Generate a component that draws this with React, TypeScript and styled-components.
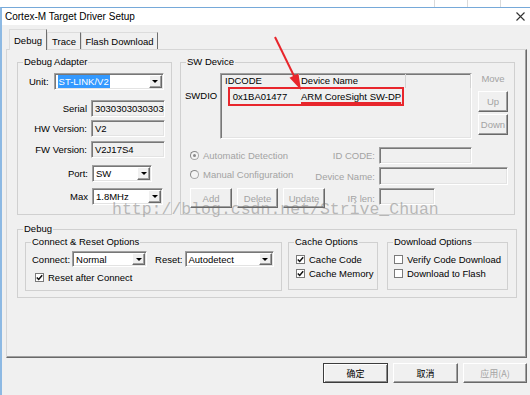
import React from "react";
import styled, { createGlobalStyle, css } from "styled-components";

const GlobalStyle = createGlobalStyle`
  html, body {
    margin: 0;
    padding: 0;
    background: #fff;
  }
  body {
    font-family: "Liberation Sans", "Noto Sans CJK SC", sans-serif;
    font-size: 9.5px;
    color: #000;
  }
  * {
    box-sizing: border-box;
  }
`;

const sunken = css`
  border-top: 1px solid #a0a0a0;
  border-left: 1px solid #a0a0a0;
  border-right: 1px solid #fff;
  border-bottom: 1px solid #fff;
  box-shadow: inset 1px 1px 0 #777, inset -1px -1px 0 #e3e3e3;
`;

const raised = css`
  border-top: 1px solid #fff;
  border-left: 1px solid #fff;
  border-right: 1px solid #696969;
  border-bottom: 1px solid #696969;
  box-shadow: inset -1px -1px 0 #a0a0a0;
  background: #f0f0f0;
`;

const Screen = styled.div`
  position: relative;
  width: 530px;
  height: 395px;
  overflow: hidden;
  display: flex;
  flex-direction: column;
  background: #fff;
`;

const BackdropStrip = styled.div`
  flex: none;
  height: 7px;
  background:
    linear-gradient(#dadada, #dadada) 434px 0 / 1px 100% no-repeat,
    linear-gradient(#dadada, #dadada) 467px 0 / 1px 100% no-repeat,
    linear-gradient(#dadada, #dadada) 500px 0 / 1px 100% no-repeat,
    #fff;
`;

const Window = styled.div`
  flex: 1;
  display: flex;
  flex-direction: column;
  border-top: 1px solid #76a9d9;
  border-left: 2px solid #8db9e3;
`;

const TitleBar = styled.div`
  flex: none;
  height: 17px;
  background: #fff;
  display: flex;
  align-items: center;
  justify-content: space-between;
  padding: 0 5px 0 3px;
  font-size: 10px;
`;

const Body = styled.div`
  flex: 1;
  background: #f0f0f0;
  padding: 4px 3px 0 4px;
  display: flex;
  flex-direction: column;
`;

const TabRow = styled.div`
  display: flex;
  align-items: flex-end;
  height: 20px;
  padding-left: 3px;
  position: relative;
  z-index: 1;
`;

const Tab = styled.div<{ $active?: boolean; $w: number }>`
  width: ${(p) => p.$w}px;
  height: ${(p) => (p.$active ? 21 : 17)}px;
  margin-bottom: ${(p) => (p.$active ? -1 : 0)}px;
  background: #f0f0f0;
  border-top: 1px solid #dcdcdc;
  border-left: 1px solid #dcdcdc;
  border-right: 1px solid #6e6e6e;
  display: flex;
  align-items: center;
  justify-content: center;
  white-space: nowrap;
`;

const Panel = styled.div`
  flex: none;
  width: 521px;
  height: 309px;
  border-top: 1px solid #d6d6d6;
  border-left: 1px solid #d6d6d6;
  border-right: 1px solid #696969;
  border-bottom: 1px solid #696969;
  box-shadow: inset -1px -1px 0 #a0a0a0;
  padding: 6px 0 0 10px;
  display: flex;
  flex-direction: column;
`;

const TopRow = styled.div`
  display: flex;
  gap: 8px;
`;

const GroupBox = styled.fieldset<{ $w: number; $h: number }>`
  flex: none;
  margin: 0;
  padding: 0;
  min-width: 0;
  width: ${(p) => p.$w}px;
  height: ${(p) => p.$h}px;
  border: 1px solid #d0d0d0;
`;

const GroupLegend = styled.legend`
  margin-left: 5px;
  padding: 0 1px;
  line-height: 12px;
  font-size: 9.5px;
`;

const FieldRow = styled.div<{ $top: number; $left?: number }>`
  display: flex;
  align-items: center;
  margin-top: ${(p) => p.$top}px;
  padding-left: ${(p) => p.$left ?? 0}px;
  white-space: nowrap;
`;

const FieldLabel = styled.span<{ $w?: number; $gap: number; $muted?: boolean }>`
  width: ${(p) => (p.$w ? `${p.$w}px` : "auto")};
  text-align: right;
  margin-right: ${(p) => p.$gap}px;
  color: ${(p) => (p.$muted ? "#a3a3a3" : "#000")};
  flex: none;
`;

const ReadField = styled.div<{ $w: number; $h?: number }>`
  ${sunken};
  width: ${(p) => p.$w}px;
  height: ${(p) => p.$h ?? 17}px;
  background: #f0f0f0;
  padding-left: 3px;
  line-height: 15px;
  overflow: hidden;
  white-space: nowrap;
`;

const ComboBox = styled.div<{ $w: number; $h?: number }>`
  ${sunken};
  width: ${(p) => p.$w}px;
  height: ${(p) => p.$h ?? 17}px;
  background: #fff;
  display: flex;
  align-items: stretch;
  padding: 1px;
  flex: none;
`;

const ComboText = styled.div`
  flex: 1;
  display: flex;
  align-items: center;
  padding-left: 2px;
  overflow: hidden;
`;

const Selected = styled.span`
  background: #3399ff;
  color: #fff;
  padding: 1px 1px;
  line-height: 12px;
`;

const ComboButton = styled.div`
  ${raised};
  width: 13px;
  display: flex;
  align-items: center;
  justify-content: center;
  &::after {
    content: "";
    border-left: 3px solid transparent;
    border-right: 3px solid transparent;
    border-top: 3px solid #000;
  }
`;

const SwContent = styled.div`
  display: flex;
  flex-direction: column;
`;

const SwTop = styled.div`
  display: flex;
  margin-top: 5px;
  padding-left: 4px;
`;

const SwdioLabel = styled.div`
  width: 35px;
  margin-top: 17px;
  line-height: 12px;
`;

const DeviceTable = styled.div`
  ${sunken};
  position: relative;
  width: 252px;
  height: 66px;
  background: #f0f0f0;
`;

const TableRow = styled.div<{ $h: number }>`
  display: flex;
  height: ${(p) => p.$h}px;
  line-height: ${(p) => p.$h}px;
  white-space: nowrap;
`;

const HeaderCell = styled.div<{ $w?: number; $pad: number }>`
  width: ${(p) => (p.$w ? `${p.$w}px` : "auto")};
  flex: ${(p) => (p.$w ? "none" : 1)};
  padding-left: ${(p) => p.$pad}px;
  border-right: 1px solid #d3d3d3;
`;

const DataCell = styled.div<{ $w: number; $center?: boolean; $pad?: number }>`
  width: ${(p) => p.$w}px;
  text-align: ${(p) => (p.$center ? "center" : "left")};
  padding-left: ${(p) => p.$pad ?? 0}px;
`;

const MarkedName = styled.span`
  text-decoration: underline;
  text-decoration-color: #e8262c;
  text-decoration-thickness: 2px;
  text-underline-offset: 2px;
`;

const RedFrame = styled.div`
  position: absolute;
  left: 7px;
  top: 13px;
  width: 176px;
  height: 19px;
  border: 2px solid #e8262c;
  pointer-events: none;
`;

const SideColumn = styled.div`
  display: flex;
  flex-direction: column;
  margin-left: 6px;
  width: 30px;
`;

const MutedLabel = styled.div`
  color: #a3a3a3;
  line-height: 12px;
  text-align: center;
`;

const WinButton = styled.button<{ $w: number; $h: number; $off?: boolean; $default?: boolean; $top?: number }>`
  ${raised};
  width: ${(p) => p.$w}px;
  height: ${(p) => p.$h}px;
  margin: ${(p) => p.$top ?? 0}px 0 0 0;
  padding: 0;
  font-family: inherit;
  font-size: 9.5px;
  color: ${(p) => (p.$off ? "#a3a3a3" : "#000")};
  flex: none;
  ${(p) =>
    p.$default &&
    css`
      border: 1px solid #3c3c3c;
      box-shadow: inset 1px 1px 0 #fff, inset -1px -1px 0 #8a8a8a;
    `}
`;

const SwLower = styled.div`
  display: grid;
  grid-template-columns: 124px 65px auto;
  grid-template-rows: 17px 18px 20px;
  row-gap: 3px;
  margin-top: 8px;
  padding-left: 9px;
  white-space: nowrap;
`;

const OptionRadio = styled.div<{ $shift?: number }>`
  display: flex;
  align-items: center;
  gap: 4px;
  color: #a3a3a3;
  margin-top: ${(p) => p.$shift ?? 0}px;
  align-self: center;
`;

const RadioDot = styled.span<{ $on?: boolean }>`
  width: 9px;
  height: 9px;
  border-radius: 50%;
  border: 1px solid #a8a8a8;
  border-top-color: #8a8a8a;
  border-left-color: #8a8a8a;
  background: #f4f4f4;
  display: flex;
  align-items: center;
  justify-content: center;
  &::after {
    content: "";
    width: 3px;
    height: 3px;
    border-radius: 50%;
    background: ${(p) => (p.$on ? "#8a8a8a" : "transparent")};
  }
`;

const GridLabel = styled.div`
  color: #a3a3a3;
  text-align: right;
  padding-right: 4px;
  align-self: center;
`;

const ButtonGroup = styled.div`
  display: flex;
  gap: 5px;
`;

const InnerRow = styled.div`
  display: flex;
  margin-top: 1px;
  padding-left: 7px;
`;

const OptionList = styled.div<{ $left: number; $top: number }>`
  display: flex;
  flex-direction: column;
  padding: ${(p) => p.$top}px 3px 0 ${(p) => p.$left}px;
  overflow: hidden;
`;

const CheckRow = styled.div`
  display: flex;
  align-items: center;
  gap: 4px;
  height: 14px;
  white-space: nowrap;
`;

const CheckBox = styled.span`
  flex: none;
  width: 9px;
  height: 9px;
  border: 1px solid #7a7a7a;
  background: #fff;
  display: flex;
  align-items: center;
  justify-content: center;
`;

const ButtonBar = styled.div`
  display: flex;
  justify-content: flex-end;
  gap: 5px;
  margin-top: 5px;
`;

const CjkText = styled.span`
  font-size: 9px;
  font-family: "Noto Sans CJK SC", "Liberation Sans", sans-serif;
`;

const Watermark = styled.div`
  position: absolute;
  left: 112px;
  top: 201px;
  font-family: "Liberation Mono", "DejaVu Sans Mono", monospace;
  font-size: 16.5px;
  line-height: 17px;
  color: rgba(110, 110, 110, 0.45);
  white-space: nowrap;
  pointer-events: none;
`;

const ArrowLayer = styled.svg`
  position: absolute;
  left: 0;
  top: 0;
  pointer-events: none;
`;

const CloseIcon = () => (
  <svg width="9" height="9" viewBox="0 0 9 9">
    <path d="M0.5 0.5 L8.5 8.5 M8.5 0.5 L0.5 8.5" stroke="#333" strokeWidth="1.1" />
  </svg>
);

const Tick = () => (
  <svg width="7" height="7" viewBox="0 0 7 7">
    <path d="M0.8 3.4 L2.7 5.4 L6.2 1.2" stroke="#111" strokeWidth="1.5" fill="none" />
  </svg>
);

const Check = ({ on, label }: { on?: boolean; label: string }) => (
  <CheckRow>
    <CheckBox>{on && <Tick />}</CheckBox>
    {label}
  </CheckRow>
);

const Combo = ({ w, h, children }: { w: number; h?: number; children: React.ReactNode }) => (
  <ComboBox $w={w} $h={h}>
    <ComboText>{children}</ComboText>
    <ComboButton />
  </ComboBox>
);

const DebugAdapter = () => (
  <GroupBox $w={155} $h={159}>
    <GroupLegend>Debug Adapter</GroupLegend>
    <FieldRow $top={5} $left={11}>
      <FieldLabel $gap={5}>Unit:</FieldLabel>
      <Combo w={110}>
        <Selected>ST-LINK/V2</Selected>
      </Combo>
    </FieldRow>
    <FieldRow $top={10}>
      <FieldLabel $w={69} $gap={4}>Serial</FieldLabel>
      <ReadField $w={74}>3030303030303030</ReadField>
    </FieldRow>
    <FieldRow $top={3}>
      <FieldLabel $w={69} $gap={4}>HW Version:</FieldLabel>
      <ReadField $w={74}>V2</ReadField>
    </FieldRow>
    <FieldRow $top={4}>
      <FieldLabel $w={69} $gap={4}>FW Version:</FieldLabel>
      <ReadField $w={74}>V2J17S4</ReadField>
    </FieldRow>
    <FieldRow $top={7}>
      <FieldLabel $w={70} $gap={4}>Port:</FieldLabel>
      <Combo w={60}>SW</Combo>
    </FieldRow>
    <FieldRow $top={6}>
      <FieldLabel $w={70} $gap={4}>Max</FieldLabel>
      <Combo w={71}>1.8MHz</Combo>
    </FieldRow>
  </GroupBox>
);

const SwDevice = () => (
  <GroupBox $w={335} $h={159}>
    <GroupLegend>SW Device</GroupLegend>
    <SwContent>
      <SwTop>
        <SwdioLabel>SWDIO</SwdioLabel>
        <DeviceTable>
          <TableRow $h={14}>
            <HeaderCell $w={78} $pad={4}>IDCODE</HeaderCell>
            <HeaderCell $w={107} $pad={2}>Device Name</HeaderCell>
            <HeaderCell $pad={0} />
          </TableRow>
          <TableRow $h={17}>
            <DataCell $w={78} $center>0x1BA01477</DataCell>
            <DataCell $w={150} $pad={2}>
              <MarkedName>ARM CoreSight SW-DP</MarkedName>
            </DataCell>
          </TableRow>
          <RedFrame />
        </DeviceTable>
        <SideColumn>
          <MutedLabel>Move</MutedLabel>
          <WinButton $w={30} $h={21} $top={6} $off>Up</WinButton>
          <WinButton $w={30} $h={21} $top={2} $off>Down</WinButton>
        </SideColumn>
      </SwTop>
      <SwLower>
        <OptionRadio>
          <RadioDot $on />
          Automatic Detection
        </OptionRadio>
        <GridLabel>ID CODE:</GridLabel>
        <ReadField $w={93} />
        <OptionRadio $shift={-3}>
          <RadioDot />
          Manual Configuration
        </OptionRadio>
        <GridLabel>Device Name:</GridLabel>
        <ReadField $w={129} $h={18} />
        <ButtonGroup>
          <WinButton $w={42} $h={20} $off>Add</WinButton>
          <WinButton $w={41} $h={20} $off>Delete</WinButton>
          <WinButton $w={42} $h={20} $off>Update</WinButton>
        </ButtonGroup>
        <GridLabel>IR len:</GridLabel>
        <ReadField $w={56} />
      </SwLower>
    </SwContent>
  </GroupBox>
);

const DebugOptions = () => (
  <GroupBox $w={500} $h={75} style={{ marginTop: 8 }}>
    <GroupLegend>Debug</GroupLegend>
    <InnerRow>
      <GroupBox $w={257} $h={55}>
        <GroupLegend>Connect &amp; Reset Options</GroupLegend>
        <FieldRow $top={3} $left={6}>
          <FieldLabel $gap={2}>Connect:</FieldLabel>
          <Combo w={75} h={16}>Normal</Combo>
          <FieldLabel $gap={2} style={{ marginLeft: 8 }}>Reset:</FieldLabel>
          <Combo w={89} h={16}>Autodetect</Combo>
        </FieldRow>
        <OptionList $left={9} $top={3}>
          <Check on label="Reset after Connect" />
        </OptionList>
      </GroupBox>
      <GroupBox $w={90} $h={54} style={{ marginLeft: 6 }}>
        <GroupLegend>Cache Options</GroupLegend>
        <OptionList $left={7} $top={4}>
          <Check on label="Cache Code" />
          <Check on label="Cache Memory" />
        </OptionList>
      </GroupBox>
      <GroupBox $w={121} $h={54} style={{ marginLeft: 9 }}>
        <GroupLegend>Download Options</GroupLegend>
        <OptionList $left={6} $top={4}>
          <Check label="Verify Code Download" />
          <Check label="Download to Flash" />
        </OptionList>
      </GroupBox>
    </InnerRow>
  </GroupBox>
);

export default function App() {
  return (
    <>
      <GlobalStyle />
      <Screen>
        <BackdropStrip />
        <Window>
          <TitleBar>
            <span>Cortex-M Target Driver Setup</span>
            <CloseIcon />
          </TitleBar>
          <Body>
            <TabRow>
              <Tab $active $w={38}>Debug</Tab>
              <Tab $w={34}>Trace</Tab>
              <Tab $w={77}>Flash Download</Tab>
            </TabRow>
            <Panel>
              <TopRow>
                <DebugAdapter />
                <SwDevice />
              </TopRow>
              <DebugOptions />
            </Panel>
            <ButtonBar>
              <WinButton $w={65} $h={20} $default>
                <CjkText>确定</CjkText>
              </WinButton>
              <WinButton $w={65} $h={20}>
                <CjkText>取消</CjkText>
              </WinButton>
              <WinButton $w={64} $h={20} $off>
                <CjkText>应用(A)</CjkText>
              </WinButton>
            </ButtonBar>
          </Body>
        </Window>
        <Watermark>http://blog.csdn.net/Strive_Chuan</Watermark>
        <ArrowLayer width="530" height="395" viewBox="0 0 530 395">
          <line x1="275" y1="37" x2="295" y2="78" stroke="#e8262c" strokeWidth="2" />
          <polygon points="289.5,77.8 298.4,73.4 301,90" fill="#e8262c" />
        </ArrowLayer>
      </Screen>
    </>
  );
}
